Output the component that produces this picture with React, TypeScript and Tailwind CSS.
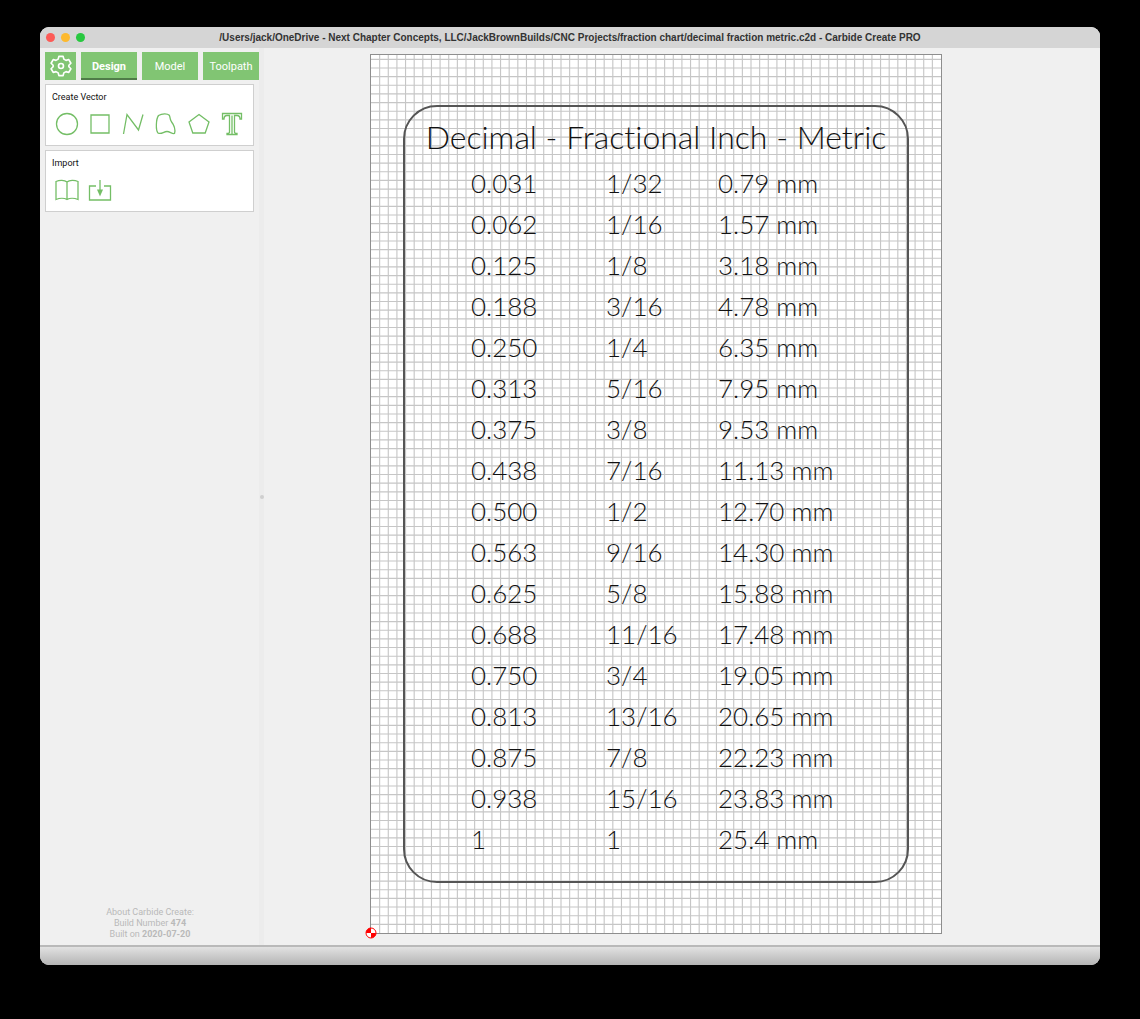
import { ReactNode } from 'react';

const ROWS = [
  ['0.031', '1/32', '0.79 mm'],
  ['0.062', '1/16', '1.57 mm'],
  ['0.125', '1/8', '3.18 mm'],
  ['0.188', '3/16', '4.78 mm'],
  ['0.250', '1/4', '6.35 mm'],
  ['0.313', '5/16', '7.95 mm'],
  ['0.375', '3/8', '9.53 mm'],
  ['0.438', '7/16', '11.13 mm'],
  ['0.500', '1/2', '12.70 mm'],
  ['0.563', '9/16', '14.30 mm'],
  ['0.625', '5/8', '15.88 mm'],
  ['0.688', '11/16', '17.48 mm'],
  ['0.750', '3/4', '19.05 mm'],
  ['0.813', '13/16', '20.65 mm'],
  ['0.875', '7/8', '22.23 mm'],
  ['0.938', '15/16', '23.83 mm'],
  ['1', '1', '25.4 mm'],
];

const VECTOR_TOOLS = [
  { label: 'Circle', icon: <circle cx="12" cy="12" r="10.5" /> },
  { label: 'Rectangle', icon: <path d="M3 3h18v18H3z" /> },
  { label: 'Polyline', icon: <path d="M2.500 22 6 2.500l11.500 15.500L22 2.500" /> },
  {
    label: 'Curve',
    icon: <path d="M4.500 3.500C8 1.300 13.500 1.300 15.300 3.200c1 1.800.2 3.300 2 6.300 3.500 4.500 4.200 8.500 3.200 12-2.500.8-4.500-2-7.500-2-3.500 0-5.500 3.300-9 1.500C1.500 18 2 7 4.500 3.500z" />,
  },
  { label: 'Polygon', icon: <path d="M12 2.500 22 10l-3.800 11H5.800L2 10z" /> },
  {
    label: 'Text',
    icon: (
      <path d="M2.500 1.500h19v5.500h-1.500c0-2-1-3.500-3-3.500h-2.500V20c0 1 1 1.500 2.500 1.500v1H7v-1c1.500 0 2.500-.5 2.500-1.500V3.500H7c-2 0-3 1.500-3 3.500H2.500zM12 3.500V22" />
    ),
  },
];

const IMPORT_TOOLS = [
  {
    label: 'Library',
    icon: <path d="M12 4C9.500 2 4.500 2 1 3.500v18c3.500-1.500 8.500-1.500 11 0 2.500-1.500 7.500-1.500 11 0v-18C19.500 2 14.500 2 12 4zm0 0v17.500" />,
  },
  {
    label: 'Import file',
    icon: (
      <>
        <path d="M8 8H1.500v14h21V8H16M12 2v10" />
        <path d="M9 11.500h6l-3 7z" fill="currentColor" stroke="none" />
      </>
    ),
  },
];

function ToolPanel({ title, tools }: { title: string; tools: { label: string; icon: ReactNode }[] }) {
  return (
    <section className="mr-[5px] h-[62px] border border-[#cfcfcf] bg-white px-1 pt-[6px]">
      <h2 className="px-[2px] text-[9px] leading-3 text-[#111]">{title}</h2>
      <div className="mt-[5px] flex">
        {tools.map((tool) => (
          <button key={tool.label} aria-label={tool.label} className="flex h-8 w-[33px] items-center justify-center text-[#74be66]">
            <svg width="24" height="24" viewBox="0 0 24 24" fill="none" stroke="currentColor" strokeWidth="1.3">
              {tool.icon}
            </svg>
          </button>
        ))}
      </div>
    </section>
  );
}

function Sidebar() {
  const tab = 'h-7 w-14 border-b-2 pt-[2px] text-[11px] leading-none text-white';
  return (
    <aside className="flex w-[219px] shrink-0 flex-col gap-1 pt-1 pl-[5px]">
      <nav className="flex gap-[5px]">
        <button aria-label="Settings" className="flex h-7 w-[31px] items-center justify-center bg-[#81c573] text-white">
          <svg width="22" height="22" viewBox="0 0 24 24" fill="none" stroke="currentColor" strokeWidth="1.8" strokeLinejoin="round">
            <path d="M9.700 1.500h4.600l.8 3 2.400 1.400 3-.9 2.300 4-2.200 2.200v1.600l2.200 2.200-2.300 4-3-.9-2.400 1.400-.8 3H9.700l-.8-3-2.400-1.400-3 .9-2.300-4 2.200-2.200v-1.600L1.200 9l2.300-4 3 .9 2.400-1.400z" />
            <circle cx="12" cy="12" r="2.700" />
          </svg>
        </button>
        <button className={`${tab} border-[#4f7c48] bg-[#81c573] font-bold`}>Design</button>
        <button className={`${tab} border-[#81c573] bg-[#81c573]`}>Model</button>
        <button className={`${tab} border-[#81c573] bg-[#81c573]`}>Toolpath</button>
      </nav>
      <ToolPanel title="Create Vector" tools={VECTOR_TOOLS} />
      <ToolPanel title="Import" tools={IMPORT_TOOLS} />
      <footer className="mt-auto pr-1 pb-[5px] text-center text-[9px] leading-[11px] text-[#b9b9b9]">
        <p>About Carbide Create:</p>
        <p>
          Build Number <b>474</b>
        </p>
        <p>
          Built on <b>2020-07-20</b>
        </p>
      </footer>
    </aside>
  );
}

// Quarter inch grid, measured up from the origin in the bottom left corner
function Grid() {
  return (
    <svg className="absolute inset-0 h-full w-full" viewBox="0 0 66 101.5" preserveAspectRatio="none" stroke="#c6c6c6" strokeWidth="0.13">
      {Array.from({ length: 65 }, (_, i) => (
        <path key={`v${i}`} d={`M${i + 1} 0V101.5`} />
      ))}
      {Array.from({ length: 101 }, (_, i) => (
        <path key={`h${i}`} d={`M0 ${i + 0.5}H66`} />
      ))}
    </svg>
  );
}

function Stock() {
  return (
    <div className="relative w-[572px] border border-[#8e8e8e] bg-white px-8 py-[50px]">
      <Grid />
      <div className="relative rounded-[34px] border-2 border-[#555] pt-[10px] pb-[21px] font-['Lato',sans-serif] font-light text-[#111] [font-variant-ligatures:none]">
        <h1 className="text-center text-[32px] leading-10 whitespace-nowrap">Decimal - Fractional Inch - Metric</h1>
        <table className="mt-[6px] ml-[66px] table-fixed text-[26px]">
          <tbody>
            {ROWS.map(([decimal, fraction, metric]) => (
              <tr key={decimal} className="h-[41px]">
                <td className="w-[135px] p-0">{decimal}</td>
                <td className="w-28 p-0">{fraction}</td>
                <td className="w-36 p-0 whitespace-nowrap">{metric}</td>
              </tr>
            ))}
          </tbody>
        </table>
      </div>
      <svg className="absolute -bottom-[6px] -left-[6px]" width="12" height="12" viewBox="0 0 12 12">
        <circle cx="6" cy="6" r="5" fill="#fff" stroke="#f00" />
        <path d="M6 6V1a5 5 0 0 0-5 5zM6 6v5a5 5 0 0 0 5-5z" fill="#f00" />
      </svg>
    </div>
  );
}

export default function App() {
  return (
    <div className="flex min-h-screen flex-col bg-black px-10 pt-[27px] pb-[54px] font-['Roboto',sans-serif]">
      <div className="flex grow flex-col overflow-hidden rounded-[9px] bg-[#f0f0f0]">
        <header className="relative flex h-[21px] items-center justify-center bg-[#d5d5d5]">
          <div className="absolute left-[6px] flex gap-[6px]">
            <button aria-label="Close" className="size-[9px] rounded-full bg-[#fc5b57]" />
            <button aria-label="Minimize" className="size-[9px] rounded-full bg-[#fdb92e]" />
            <button aria-label="Zoom" className="size-[9px] rounded-full bg-[#28c840]" />
          </div>
          <p className="font-['Liberation_Sans',sans-serif] text-[10px] font-bold whitespace-nowrap text-[#333]">
            /Users/jack/OneDrive - Next Chapter Concepts, LLC/JackBrownBuilds/CNC Projects/fraction chart/decimal fraction metric.c2d - Carbide Create PRO
          </p>
        </header>
        <div className="flex grow">
          <Sidebar />
          <div className="flex w-[5px] shrink-0 items-center justify-center bg-[#ececec]">
            <span className="size-1 rounded-full bg-[#cfcfcf]" />
          </div>
          <main className="flex grow items-start justify-center pt-[6px] pr-[52px] pb-[10px]">
            <Stock />
          </main>
        </div>
        <div className="h-5 border-t-2 border-[#b9b9b9] bg-linear-to-b from-[#e2e2e2] to-[#b4b4b4]" />
      </div>
    </div>
  );
}
